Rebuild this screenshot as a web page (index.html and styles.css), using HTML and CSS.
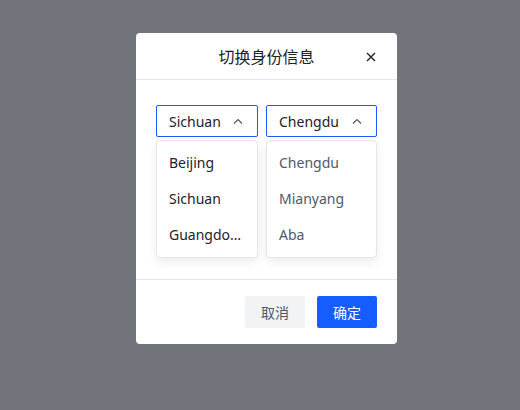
FILE: index.html
```html
<!DOCTYPE html>
<html lang="zh">
<head>
<meta charset="utf-8">
<link rel="stylesheet" href="styles.css">
</head>
<body>
<div class="mask">
  <div class="modal">
    <div class="modal-header">
      <span class="title">切换身份信息</span>
      <span class="close">
        <svg width="10" height="10" viewBox="0 0 10 10"><path d="M1 1L9 9M9 1L1 9" stroke="#1d2129" stroke-width="1.4" fill="none"/></svg>
      </span>
    </div>
    <div class="modal-body">
      <div class="field field-a">
        <div class="select">
          <span>Sichuan</span>
          <svg class="arrow" width="10" height="6" viewBox="0 0 10 6"><path d="M1 5.5L5 1.5L9 5.5" stroke="#4e5969" stroke-width="1.2" fill="none"/></svg>
        </div>
        <ul class="menu">
          <li>Beijing</li>
          <li>Sichuan</li>
          <li>Guangdo…</li>
        </ul>
      </div>
      <div class="field field-b">
        <div class="select">
          <span>Chengdu</span>
          <svg class="arrow" width="10" height="6" viewBox="0 0 10 6"><path d="M1 5.5L5 1.5L9 5.5" stroke="#4e5969" stroke-width="1.2" fill="none"/></svg>
        </div>
        <ul class="menu menu-soft">
          <li>Chengdu</li>
          <li>Mianyang</li>
          <li>Aba</li>
        </ul>
      </div>
    </div>
    <div class="modal-footer">
      <button class="btn btn-cancel">取消</button>
      <button class="btn btn-ok">确定</button>
    </div>
  </div>
</div>
</body>
</html>
```
FILE: styles.css
```css
html, body {
  margin: 0;
  padding: 0;
  height: 100%;
}
body {
  font-family: "Noto Sans", "Noto Sans CJK SC", sans-serif;
  font-size: 14px;
  color: #1d2129;
}
.mask {
  width: 520px;
  height: 410px;
  background: #72747b;
  overflow: hidden;
}
.modal {
  margin-top: 33px;
  margin-left: 136px;
  width: 261px;
  height: 311px;
  background: #fff;
  border-radius: 4px;
  display: flex;
  flex-direction: column;
}
.modal-header {
  height: 46px;
  border-bottom: 1px solid #e5e6eb;
  display: flex;
  align-items: center;
  justify-content: center;
  position: relative;
}
.title {
  font-family: "Noto Sans CJK SC", sans-serif;
  font-size: 16px;
  color: #1d2129;
}
.close {
  position: absolute;
  right: 21px;
  top: 19px;
  width: 10px;
  height: 10px;
  display: flex;
}
.modal-body {
  flex: 1;
  padding: 25px 20px 0 20px;
  display: flex;
  gap: 8px;
  align-items: flex-start;
}
.field {
  display: flex;
  flex-direction: column;
  gap: 3px;
}
.field-a { width: 102px; }
.field-b { width: 111px; }
.select {
  height: 32px;
  box-sizing: border-box;
  border: 1px solid #165dff;
  border-radius: 2px;
  padding: 0 14px 0 12px;
  display: flex;
  align-items: center;
  justify-content: space-between;
  color: #1d2129;
}
.menu {
  list-style: none;
  margin: 0;
  padding: 4px 0;
  border: 1px solid #e5e6eb;
  border-radius: 4px;
  box-shadow: 0 4px 10px rgba(0, 0, 0, 0.08);
  background: #fff;
}
.menu li {
  height: 36px;
  line-height: 36px;
  padding: 0 12px;
  color: #1d2129;
  white-space: nowrap;
}
.menu-soft li {
  color: #4e5969;
}
.modal-footer {
  height: 64px;
  border-top: 1px solid #e5e6eb;
  display: flex;
  align-items: center;
  justify-content: flex-end;
  gap: 12px;
  padding: 0 20px;
}
.btn {
  width: 60px;
  height: 32px;
  border: none;
  border-radius: 2px;
  font-family: "Noto Sans CJK SC", sans-serif;
  font-size: 14px;
  padding: 0;
}
.btn-cancel {
  background: #f2f3f5;
  color: #4e5969;
}
.btn-ok {
  background: #165dff;
  color: #fff;
}
```
